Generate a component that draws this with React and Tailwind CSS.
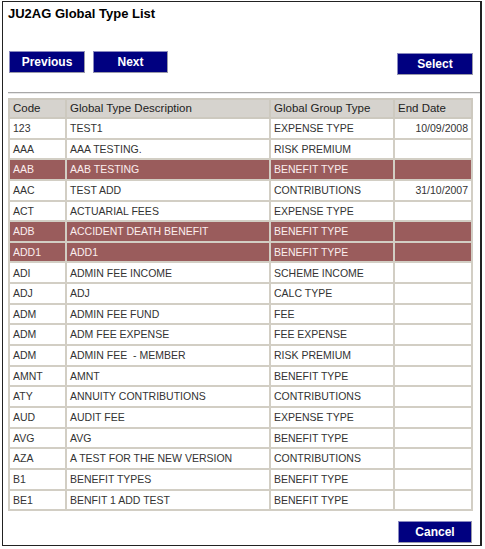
import React from "react";

const rows = [
  ["123", "TEST1", "EXPENSE TYPE", "10/09/2008", false],
  ["AAA", "AAA TESTING.", "RISK PREMIUM", "", false],
  ["AAB", "AAB TESTING", "BENEFIT TYPE", "", true],
  ["AAC", "TEST ADD", "CONTRIBUTIONS", "31/10/2007", false],
  ["ACT", "ACTUARIAL FEES", "EXPENSE TYPE", "", false],
  ["ADB", "ACCIDENT DEATH BENEFIT", "BENEFIT TYPE", "", true],
  ["ADD1", "ADD1", "BENEFIT TYPE", "", true],
  ["ADI", "ADMIN FEE INCOME", "SCHEME INCOME", "", false],
  ["ADJ", "ADJ", "CALC TYPE", "", false],
  ["ADM", "ADMIN FEE FUND", "FEE", "", false],
  ["ADM", "ADM FEE EXPENSE", "FEE EXPENSE", "", false],
  ["ADM", "ADMIN FEE  - MEMBER", "RISK PREMIUM", "", false],
  ["AMNT", "AMNT", "BENEFIT TYPE", "", false],
  ["ATY", "ANNUITY CONTRIBUTIONS", "CONTRIBUTIONS", "", false],
  ["AUD", "AUDIT FEE", "EXPENSE TYPE", "", false],
  ["AVG", "AVG", "BENEFIT TYPE", "", false],
  ["AZA", "A TEST FOR THE NEW VERSION", "CONTRIBUTIONS", "", false],
  ["B1", "BENEFIT TYPES", "BENEFIT TYPE", "", false],
  ["BE1", "BENFIT 1 ADD TEST", "BENEFIT TYPE", "", false],
];

function NavButton({ label, className = "" }) {
  return (
    <button
      className={
        "h-[22px] bg-[#000080] text-white text-[12px] font-bold border border-t-[#8a8ac0] border-l-[#8a8ac0] border-b-[#9a9aa8] border-r-[#9a9aa8] " +
        className
      }
      style={{ fontFamily: "'Liberation Sans', Arial, sans-serif" }}
    >
      {label}
    </button>
  );
}

export default function App() {
  return (
    <div
      className="w-[485px] h-[549px] bg-white overflow-hidden"
      style={{ fontFamily: "'Liberation Sans', Arial, sans-serif" }}
    >
      <div className="ml-[2px] mt-[1px] w-[480px] h-[545px] border border-[#222] border-r-2 flex flex-col">
        <div className="pl-[5px] pt-[4px] text-[13px] leading-[16px] font-bold text-black">
          JU2AG Global Type List
        </div>

        <div className="flex items-start pl-[6px] pr-[7px] mt-[29px]">
          <NavButton label="Previous" className="w-[76px]" />
          <NavButton label="Next" className="w-[75px] ml-[8px]" />
          <NavButton label="Select" className="w-[76px] ml-auto mt-[2px]" />
        </div>

        <div className="mt-[17px] ml-[5px] h-[2px] border-t border-t-[#a8a8a8] border-b border-b-[#e8e8e8]" />

        <table
          className="ml-[5px] mt-[4px] w-[463px] table-fixed border-collapse text-[10.5px] text-[#333]"
        >
          <colgroup>
            <col className="w-[57px]" />
            <col className="w-[204px]" />
            <col className="w-[124px]" />
            <col className="w-[78px]" />
          </colgroup>
          <thead>
            <tr className="h-[19px] bg-[#d6d3ce]">
              {["Code", "Global Type Description", "Global Group Type", "End Date"].map((h) => (
                <th
                  key={h}
                  className="border-2 border-[#cdc9bf] pl-[3px] text-left font-normal text-[11.5px] text-[#222] leading-none"
                >
                  {h}
                </th>
              ))}
            </tr>
          </thead>
          <tbody>
            {rows.map(([code, desc, group, date, hi], i) => (
              <tr
                key={i}
                className={
                  "h-[20.65px] " + (hi ? "bg-[#9a5c5c] text-[#fbeeee]" : "bg-white")
                }
              >
                <td className="border-2 border-[#d2cec4] pl-[3px] leading-none whitespace-pre">{code}</td>
                <td className="border-2 border-[#d2cec4] pl-[3px] leading-none whitespace-pre">{desc}</td>
                <td className="border-2 border-[#d2cec4] pl-[3px] leading-none whitespace-pre">{group}</td>
                <td className="border-2 border-[#d2cec4] pr-[3px] text-right leading-none">{date}</td>
              </tr>
            ))}
          </tbody>
        </table>

        <div className="flex justify-end pr-[8px] mt-[10px]">
          <NavButton label="Cancel" className="w-[74px] h-[21px]" />
        </div>
      </div>
    </div>
  );
}
